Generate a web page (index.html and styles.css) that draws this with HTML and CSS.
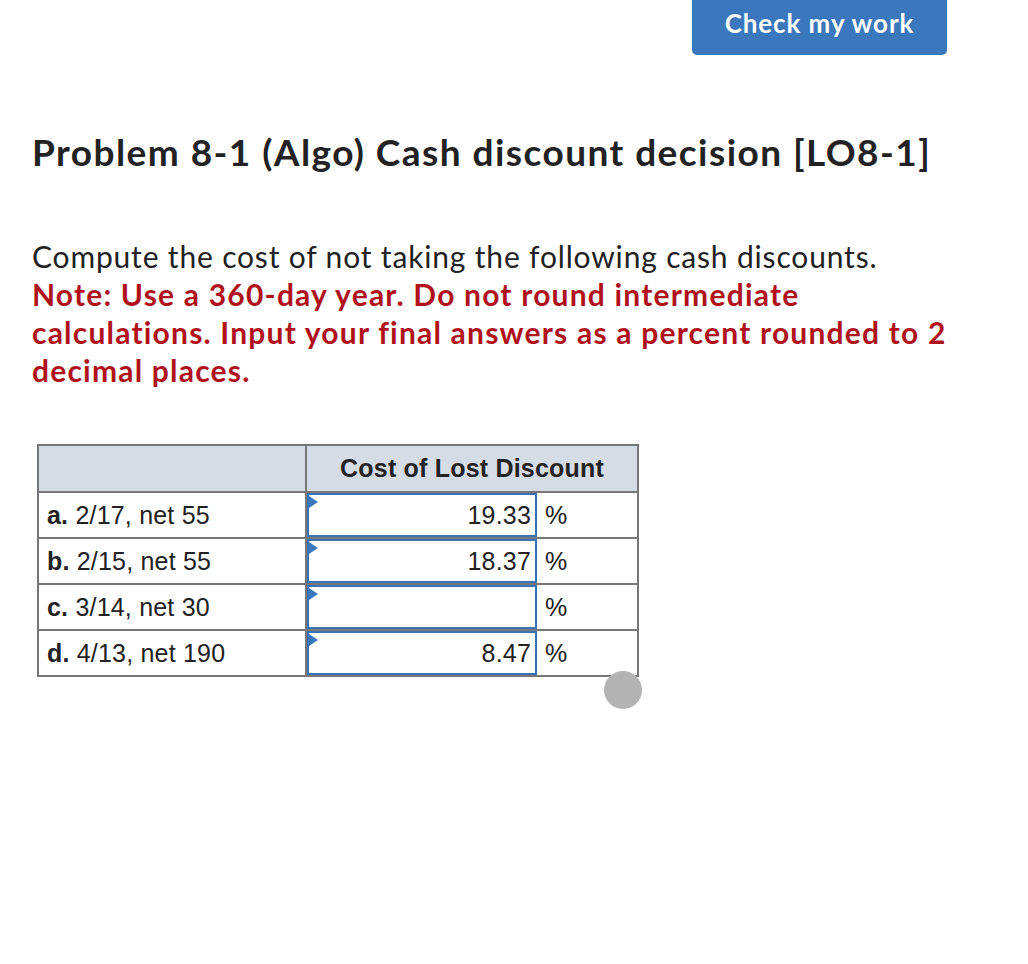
FILE: index.html
```html
<!DOCTYPE html>
<html>
<head>
<meta charset="utf-8">
<link rel="stylesheet" href="styles.css">
</head>
<body>
<div class="topbar">
  <button class="check-btn">Check my work</button>
</div>
<h1 class="title">Problem 8-1 (Algo) Cash discount decision [LO8-1]</h1>
<div class="prompt">
  <p class="lead">Compute the cost of not taking the following cash discounts.</p>
  <p class="note">Note: Use a 360-day year. Do not round intermediate calculations. Input your final answers as a percent rounded to 2 decimal places.</p>
</div>
<div class="table-wrap">
  <table class="grid">
    <colgroup>
      <col class="c-label">
      <col class="c-input">
      <col class="c-unit">
    </colgroup>
    <thead>
      <tr>
        <th></th>
        <th colspan="2" class="head">Cost of Lost Discount</th>
      </tr>
    </thead>
    <tbody>
      <tr>
        <td class="label"><b>a.</b> 2/17, net 55</td>
        <td class="input-cell"><div class="answer"><span class="flag"></span>19.33</div></td>
        <td class="unit">%</td>
      </tr>
      <tr>
        <td class="label"><b>b.</b> 2/15, net 55</td>
        <td class="input-cell"><div class="answer"><span class="flag"></span>18.37</div></td>
        <td class="unit">%</td>
      </tr>
      <tr>
        <td class="label"><b>c.</b> 3/14, net 30</td>
        <td class="input-cell"><div class="answer"><span class="flag"></span></div></td>
        <td class="unit">%</td>
      </tr>
      <tr>
        <td class="label"><b>d.</b> 4/13, net 190</td>
        <td class="input-cell"><div class="answer"><span class="flag"></span>8.47</div></td>
        <td class="unit">%</td>
      </tr>
    </tbody>
  </table>
  <div class="dot"></div>
</div>
</body>
</html>
```

FILE: styles.css
```css
html, body {
  margin: 0;
  padding: 0;
  background: #ffffff;
}
body {
  width: 1028px;
  min-height: 964px;
  font-family: Lato, "Open Sans", sans-serif;
  color: #222222;
}
.topbar {
  display: flex;
  justify-content: flex-end;
  padding-right: 81px;
}
.check-btn {
  width: 255px;
  height: 55px;
  background: #3a77bd;
  border: none;
  border-radius: 0 0 5px 5px;
  color: #ffffff;
  font-family: Lato, sans-serif;
  font-weight: 700;
  font-size: 26px;
  letter-spacing: 0.9px;
  padding: 0 0 9px;
}
.title {
  margin: 75px 0 0 32px;
  font-size: 37px;
  line-height: 44px;
  font-weight: 700;
  color: #222222;
  letter-spacing: 1.45px;
}
.prompt {
  margin: 63px 0 0 32px;
  width: 945px;
  font-size: 30px;
  line-height: 38px;
}
.prompt p {
  margin: 0;
}
.lead {
  color: #222222;
  letter-spacing: 0.83px;
}
.note {
  color: #b0121b;
  font-weight: 700;
  letter-spacing: 1.2px;
}
.table-wrap {
  position: relative;
  margin: 55px 0 0 37px;
  width: 600px;
  padding-bottom: 40px;
}
.grid {
  table-layout: fixed;
  width: 600px;
  border-collapse: collapse;
  font-family: "Liberation Sans", Arial, sans-serif;
  font-size: 25px;
  letter-spacing: 0.2px;
  color: #222222;
}
.c-label {
  width: 268px;
}
.c-input {
  width: 231px;
}
.c-unit {
  width: 101px;
}
.grid th, .grid td {
  border: 2px solid #777777;
  padding: 0;
  height: 44px;
}
.grid thead th {
  background: #d5dce6;
  height: 45px;
}
.head {
  font-weight: 700;
  text-align: center;
}
.label {
  padding-left: 8px !important;
  text-align: left;
}
.input-cell {
  border-right: none !important;
}
.answer {
  position: relative;
  box-sizing: border-box;
  height: 44px;
  border: 2px solid #3a72b8;
  text-align: right;
  padding-right: 4px;
  line-height: 40px;
}
.flag {
  position: absolute;
  left: 0;
  top: 1px;
  width: 0;
  height: 0;
  border-top: 6px solid transparent;
  border-bottom: 6px solid transparent;
  border-left: 9px solid #3a77bd;
}
.unit {
  border-left: none !important;
  padding-left: 8px !important;
  text-align: left;
}
.dot {
  position: absolute;
  left: 567px;
  bottom: 8px;
  width: 38px;
  height: 38px;
  border-radius: 50%;
  background: #b3b3b3;
}
```
